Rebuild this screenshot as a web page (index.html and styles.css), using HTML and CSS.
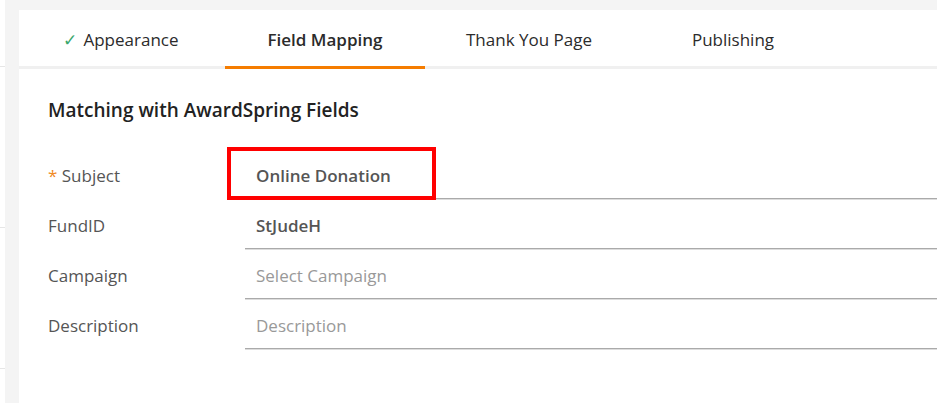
FILE: index.html
```html
<!DOCTYPE html>
<html>
<head>
<meta charset="utf-8">
<link rel="stylesheet" href="styles.css">
</head>
<body>
<div class="page">
  <div class="side">
    <div class="side-row r1"></div>
    <div class="side-row r2"></div>
    <div class="side-row r3"></div>
  </div>
  <div class="gutter"></div>
  <div class="panel">
    <nav class="tabs">
      <div class="tab"><span class="check">✓</span> Appearance</div>
      <div class="tab active">Field Mapping</div>
      <div class="tab">Thank You Page</div>
      <div class="tab">Publishing</div>
    </nav>
    <div class="content">
      <h2 class="title">Matching with AwardSpring Fields</h2>
      <div class="form">
        <div class="row">
          <div class="label"><span class="req">*</span> Subject</div>
          <div class="field"><div class="value hl">Online Donation</div></div>
        </div>
        <div class="row">
          <div class="label">FundID</div>
          <div class="field"><div class="value">StJudeH</div></div>
        </div>
        <div class="row">
          <div class="label">Campaign</div>
          <div class="field"><div class="value ph">Select Campaign</div></div>
        </div>
        <div class="row">
          <div class="label">Description</div>
          <div class="field"><div class="value ph">Description</div></div>
        </div>
      </div>
    </div>
  </div>
</div>
</body>
</html>
```

FILE: styles.css
```css
*, *::before, *::after { box-sizing: border-box; }
html, body { margin: 0; padding: 0; }
body {
  width: 937px;
  height: 403px;
  overflow: hidden;
  background: #f4f4f4;
  font-family: "Open Sans", "Liberation Sans", sans-serif;
  color: #333;
}
.page {
  display: flex;
  height: 403px;
}
.side {
  width: 5px;
  background: #fff;
  display: flex;
  flex-direction: column;
}
.side-row { border-bottom: 1px solid #e6e6e6; }
.r1 { height: 67px; }
.r2 { height: 161px; }
.r3 { height: 141px; }
.gutter { width: 14px; background: #f4f4f4; }
.panel {
  flex: 1;
  margin-top: 10px;
  background: #fff;
  display: flex;
  flex-direction: column;
}
.tabs {
  display: flex;
  height: 59px;
  border-bottom: 3px solid #f0f0f0;
}
.tab {
  width: 204px;
  display: flex;
  align-items: center;
  justify-content: center;
  font-size: 17px;
  color: #2b2b2b;
  padding-top: 3px;
  position: relative;
}
.tab.active { font-weight: 600; }
.tab.active::after {
  content: "";
  position: absolute;
  left: 2px;
  right: 2px;
  bottom: -3px;
  height: 3px;
  background: #f57c00;
}
.check { color: #3aa76d; margin-right: 6px; font-size: 17px; }
.content { padding: 0 0 0 29px; }
.title {
  margin: 28px 0 0 0;
  font-size: 19px;
  font-weight: 600;
  color: #222;
  line-height: 26px;
}
.form { margin-top: 26px; }
.row {
  display: flex;
  height: 50px;
}
.label {
  width: 197px;
  font-size: 17px;
  line-height: 23px;
  color: #555;
  padding-top: 15px;
}
.req { color: #f08a24; }
.field {
  flex: 1;
  border-bottom: 1px solid #aaa;
  box-shadow: 0 1px 0 #ddd;
  position: relative;
}
.value {
  padding: 15px 0 0 11px;
  font-size: 17px;
  line-height: 23px;
  font-weight: 600;
  color: #555;
}
.value.ph { font-weight: 400; color: #999; }
.value.hl::before {
  content: "";
  position: absolute;
  left: -18px;
  top: -2px;
  width: 209px;
  height: 53px;
  border: 4px solid #f00;
}
```
